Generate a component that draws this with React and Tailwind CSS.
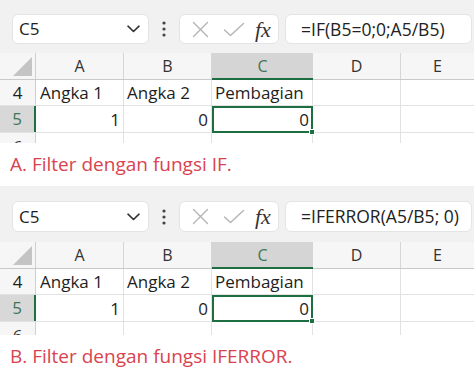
import React from 'react';

const font = { fontFamily: '"Open Sans", "Noto Sans", sans-serif' };

const ChevronDown = () => (
    <svg width="13" height="8" viewBox="0 0 13 8" fill="none">
        <path d="M1 1.2 L6.5 6.5 L12 1.2" stroke="#333" strokeWidth="1.6" strokeLinecap="round" strokeLinejoin="round" />
    </svg>
);

const Dots = () => (
    <svg width="4" height="16" viewBox="0 0 4 16">
        <circle cx="2" cy="2" r="1.6" fill="#444" />
        <circle cx="2" cy="8" r="1.6" fill="#444" />
        <circle cx="2" cy="14" r="1.6" fill="#444" />
    </svg>
);

const Cross = () => (
    <svg width="17" height="17" viewBox="0 0 17 17">
        <path d="M1.5 1.5 L15.5 15.5 M15.5 1.5 L1.5 15.5" stroke="#b4b4b4" strokeWidth="1.4" strokeLinecap="round" />
    </svg>
);

const Check = () => (
    <svg width="22" height="15" viewBox="0 0 22 15">
        <path d="M1.5 8 L7.5 13.5 L20.5 1.5" stroke="#b4b4b4" strokeWidth="1.4" fill="none" strokeLinecap="round" strokeLinejoin="round" />
    </svg>
);

const Toolbar = ({ formula, tall }) => (
    <div className={`flex items-start bg-[#f1f1f1] pl-[12px] ${tall ? 'h-[56px] pt-[15px]' : 'h-[53px] pt-[14px]'}`}>
        <div className={`flex w-[137px] items-center justify-between rounded-[6px] border border-[#e4e4e4] bg-white pl-[6px] pr-[8px] ${tall ? 'h-[31px]' : 'h-[30px]'}`}>
            <span className="text-[17px] text-[#222]">C5</span>
            <ChevronDown />
        </div>
        <div className={`flex w-[30px] items-center justify-center ${tall ? 'h-[31px]' : 'h-[30px]'}`}>
            <Dots />
        </div>
        <div className={`flex w-[100px] items-center rounded-[6px] border border-[#e4e4e4] bg-white pl-[12px] ${tall ? 'h-[31px]' : 'h-[30px]'}`}>
            <Cross />
            <div className="ml-[14px]"><Check /></div>
            <span
                className="ml-[10px] text-[22px] italic text-[#333]"
                style={{ fontFamily: '"Liberation Serif", "DejaVu Serif", serif' }}
            >
                fx
            </span>
        </div>
        <div className={`ml-[6px] flex w-[187px] items-center rounded-[6px] border border-[#e4e4e4] bg-white pl-[15px] ${tall ? 'h-[31px]' : 'h-[30px]'}`}>
            <span className="text-[17.5px] text-[#222]">{formula}</span>
        </div>
    </div>
);

const Corner = () => (
    <div className="flex h-full w-[36px] items-end justify-end border-r border-[#cfcfcf] pb-[3px] pr-[3px]">
        <svg width="19" height="19" viewBox="0 0 19 19">
            <path d="M19 0 L19 19 L0 19 Z" fill="#c4c4c4" />
        </svg>
    </div>
);

const Sheet = ({ formula, tall }) => (
    <div className="bg-white">
        <Toolbar formula={formula} tall={tall} />
        {/* column headers */}
        <div className="flex h-[27px] border-b border-[#c9c9c9] bg-[#f6f6f6] text-[16px] text-[#333]">
            <Corner />
            <div className="flex w-[88px] items-center justify-center border-r border-[#d6d6d6]">A</div>
            <div className="flex w-[88px] items-center justify-center border-r border-[#d6d6d6]">B</div>
            <div className="-mb-px flex w-[101px] items-center justify-center border-b-2 border-b-[#1d6f42] bg-[#d5d5d5] text-[#3e7656]">C</div>
            <div className="flex w-[88px] items-center justify-center border-r border-[#d6d6d6]">D</div>
            <div className="flex flex-1 items-center justify-center">E</div>
        </div>
        {/* row 4 */}
        <div className="flex h-[26px] border-b border-[#e2e2e2] text-[17px] text-[#1e1e1e]">
            <div className="flex w-[36px] items-end justify-center border-r border-[#cfcfcf] bg-[#f6f6f6] leading-[24px]">4</div>
            <div className="w-[88px] border-r border-[#e2e2e2] pl-[4px] leading-[26px]">Angka 1</div>
            <div className="w-[88px] border-r border-[#e2e2e2] pl-[3px] leading-[26px]">Angka 2</div>
            <div className="w-[101px] border-r border-[#e2e2e2] pl-[3px] leading-[26px]">Pembagian</div>
            <div className="w-[88px] border-r border-[#e2e2e2]" />
            <div className="flex-1" />
        </div>
        {/* row 5 */}
        <div className="flex h-[27px] border-b border-[#e2e2e2] text-[17px] text-[#1e1e1e]">
            <div className="flex w-[36px] items-center justify-center border-r-2 border-r-[#1d6f42] bg-[#d8d8d8] text-[#3e7656] leading-[26px]">5</div>
            <div className="w-[88px] border-r border-[#e2e2e2] pr-[3px] text-right leading-[27px]">1</div>
            <div className="w-[88px] border-r border-[#e2e2e2] pr-[3px] text-right leading-[27px]">0</div>
            <div className="relative -mb-px w-[101px] border-2 border-[#1d6f42] pr-[2px] text-right leading-[24px]">
                0
                <div className="absolute -bottom-[4px] -right-[4px] h-[6px] w-[6px] border border-white bg-[#1d6f42]" />
            </div>
            <div className="w-[88px] border-r border-[#e2e2e2]" />
            <div className="flex-1" />
        </div>
        {/* row 6, cut off at the bottom of the shot */}
        <div className={`flex overflow-hidden text-[17px] text-[#333] ${tall ? 'h-[13px]' : 'h-[10px]'}`}>
            <div className="flex w-[36px] justify-center overflow-hidden border-r border-[#cfcfcf] bg-[#f6f6f6] pt-[2px] leading-[24px]">6</div>
            <div className="w-[88px] border-r border-[#e2e2e2]" />
            <div className="w-[88px] border-r border-[#e2e2e2]" />
            <div className="w-[101px] border-r border-[#e2e2e2]" />
            <div className="w-[88px] border-r border-[#e2e2e2]" />
            <div className="flex-1" />
        </div>
    </div>
);

const Caption = ({ children }) => (
    <div className="h-[43px] pl-[10px] text-[19px] leading-[43px] text-[#d9434f]">{children}</div>
);

export default function App() {
    return (
        <div className="h-[384px] w-[474px] overflow-hidden bg-white" style={font}>
            <Sheet formula="=IF(B5=0;0;A5/B5)" />
            <Caption>A. Filter dengan fungsi IF.</Caption>
            <Sheet formula="=IFERROR(A5/B5; 0)" tall />
            <Caption>B. Filter dengan fungsi IFERROR.</Caption>
        </div>
    );
}
